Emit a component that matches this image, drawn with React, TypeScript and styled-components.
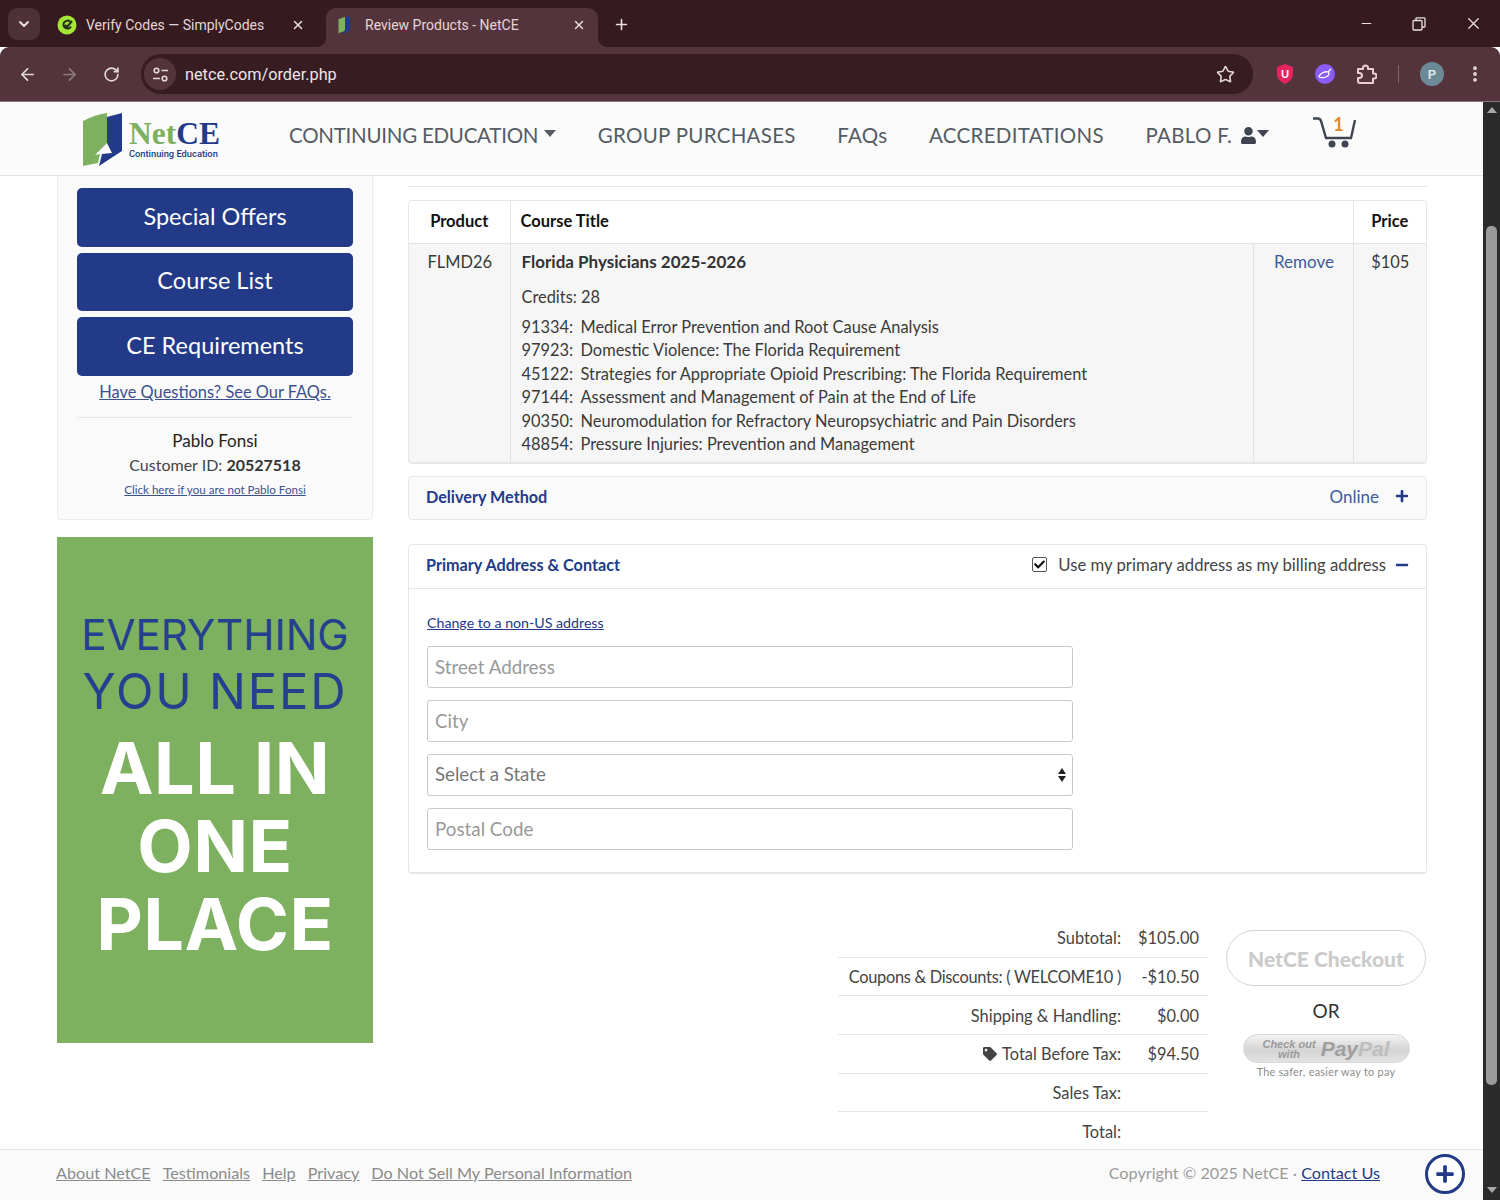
import React from 'react';
import styled, { css, createGlobalStyle } from 'styled-components';
import { ArrowLeft, ArrowRight, ChevronDown, EllipsisVertical, Minus, Plus, RotateCw, Star, X } from 'lucide-react';
import { FaCheck, FaMinus, FaPlus, FaTag, FaUser } from 'react-icons/fa';

const NAVY = '#223a87';
const SANS = '"Lato", "Liberation Sans", sans-serif';

const courses = [
    ['91334:', 'Medical Error Prevention and Root Cause Analysis'],
    ['97923:', 'Domestic Violence: The Florida Requirement'],
    ['45122:', 'Strategies for Appropriate Opioid Prescribing: The Florida Requirement'],
    ['97144:', 'Assessment and Management of Pain at the End of Life'],
    ['90350:', 'Neuromodulation for Refractory Neuropsychiatric and Pain Disorders'],
    ['48854:', 'Pressure Injuries: Prevention and Management'],
];

const totals = [
    { label: 'Subtotal:', value: '$105.00' },
    { label: 'Coupons & Discounts: ( WELCOME10 )', value: '-$10.50', tight: true },
    { label: 'Shipping & Handling:', value: '$0.00' },
    { label: 'Total Before Tax:', value: '$94.50', tag: true },
    { label: 'Sales Tax:', value: '' },
    { label: 'Total:', value: '' },
];

export default function App() {
    return (
        <Screen>
            <GlobalStyle />
            <TabStrip>
                <TabMenu><ChevronDown size={16} strokeWidth={3} /></TabMenu>
                <Tab>
                    <Favicon viewBox="0 0 20 20">
                        <circle cx="10" cy="10" r="9.5" fill="#a3e635" />
                        <path d="M13 6.5a4 4 0 1 0 1 5M8 10l2 2 5-6" fill="none" stroke="#27301a" strokeWidth="2" />
                    </Favicon>
                    <TabTitle>Verify Codes — SimplyCodes</TabTitle>
                    <X size={14} strokeWidth={2.5} />
                </Tab>
                <Tab $active>
                    <Favicon viewBox="0 0 20 24">
                        <path d="M1 5 9 2v17l-8 3z" fill="#7db05f" />
                        <path d="M9 2h6v16l-9 5 3-6z" fill="#223a87" />
                    </Favicon>
                    <TabTitle>Review Products - NetCE</TabTitle>
                    <X size={14} strokeWidth={2.5} />
                </Tab>
                <NewTab><Plus size={17} strokeWidth={2.2} /></NewTab>
                <WindowControls>
                    <Minus size={15} strokeWidth={1.6} />
                    <svg width="14" height="14" viewBox="0 0 14 14" fill="none" stroke="currentColor" strokeWidth="1.3">
                        <rect x="1" y="3.5" width="9" height="9.5" rx="1" />
                        <path d="M4 3.5V1.6q0-.8.8-.8h7.4q.8 0 .8.8v7.6q0 .8-.8.8H10" />
                    </svg>
                    <X size={19} strokeWidth={1.5} />
                </WindowControls>
            </TabStrip>

            <Toolbar>
                <ToolIcon><ArrowLeft size={19} strokeWidth={2.2} /></ToolIcon>
                <ToolIcon $dim><ArrowRight size={19} strokeWidth={2.2} /></ToolIcon>
                <ToolIcon><RotateCw size={17} strokeWidth={2.4} /></ToolIcon>
                <UrlBar>
                    <SiteInfo>
                        <svg width="17" height="17" viewBox="0 0 17 17" fill="none" stroke="currentColor" strokeWidth="1.6">
                            <circle cx="4.5" cy="4.5" r="2.3" />
                            <path d="M9.5 4.5H16M1 12.5h7" />
                            <circle cx="12.5" cy="12.5" r="2.3" />
                        </svg>
                    </SiteInfo>
                    <UrlText>netce.com/order.php</UrlText>
                    <Star size={19} strokeWidth={2} />
                </UrlBar>
                <Extensions>
                    <svg width="18" height="20" viewBox="0 0 18 20">
                        <path d="M9 0l8 3v7c0 5-4 8-8 10-4-2-8-5-8-10V3z" fill="#e5245f" />
                        <text x="9" y="13.5" textAnchor="middle" fontSize="11" fontWeight="700" fill="#fff" fontFamily="Lato">U</text>
                    </svg>
                    <svg width="20" height="20" viewBox="0 0 20 20">
                        <circle cx="10" cy="10" r="10" fill="#8b5cf6" />
                        <path d="M4 12c2-3 6-5 9-4 2 1 1 4-2 5s-7 1-7-1zM13 8l3-3" fill="none" stroke="#fff" strokeWidth="1.3" />
                    </svg>
                    <svg width="21" height="21" viewBox="0 0 21 21" fill="none" stroke="#e8cdd1" strokeWidth="2" strokeLinejoin="round">
                        <path d="M2 5h5V4a2.5 2.5 0 0 1 5 0v1h5v4.5h1a2.5 2.5 0 0 1 0 5h-1V19H4q-2 0-2-2v-3h1.500a2 2 0 0 0 0-5H2z" />
                    </svg>
                    <ToolDivider />
                    <Avatar>P</Avatar>
                    <EllipsisVertical size={20} strokeWidth={2.6} />
                </Extensions>
            </Toolbar>

            <Viewport>
                <Page>
                    <NavBar>
                        <Logo>
                            <svg width="41" height="54" viewBox="0 0 41 54">
                                <path d="M1 9Q12 3 25 1V31L13 43L18 42L16 51L1 54Z" fill="#7db05f" />
                                <path d="M25 5L40 1V39L17 54L20 42L30 41L25 31Z" fill="#223a87" />
                            </svg>
                            <LogoText>
                                <LogoName>Net<span>CE</span></LogoName>
                                <LogoTagline>Continuing Education</LogoTagline>
                            </LogoText>
                        </Logo>
                        <NavLinks>
                            <NavLink $tight>CONTINUING EDUCATION <Caret $color="#555b63" /></NavLink>
                            <NavLink>GROUP PURCHASES</NavLink>
                            <NavLink>FAQs</NavLink>
                            <NavLink>ACCREDITATIONS</NavLink>
                            <NavLink>PABLO F. <UserMenu><FaUser size={17} /><Caret $color="#3f4450" /></UserMenu></NavLink>
                        </NavLinks>
                        <Cart>
                            <svg width="43" height="31" viewBox="0 0 43 31" fill="none" stroke="#3f4450" strokeWidth="2.4">
                                <path d="M0 1.500H5Q7 1.500 8 4L13 21H38L42 3" />
                                <circle cx="19" cy="27" r="3.5" fill="#3f4450" stroke="none" />
                                <circle cx="32" cy="27" r="3.5" fill="#3f4450" stroke="none" />
                            </svg>
                            <CartCount>1</CartCount>
                        </Cart>
                    </NavBar>

                    <Content>
                        <Sidebar>
                            <SideCard>
                                <SideButton>Special Offers</SideButton>
                                <SideButton>Course List</SideButton>
                                <SideButton>CE Requirements</SideButton>
                                <FaqLink>Have Questions? See Our FAQs.</FaqLink>
                                <SideRule />
                                <CustomerName>Pablo Fonsi</CustomerName>
                                <CustomerId>Customer ID: <strong>20527518</strong></CustomerId>
                                <NotYouLink>Click here if you are not Pablo Fonsi</NotYouLink>
                            </SideCard>
                            <Banner>
                                <BannerLead>EVERYTHING</BannerLead>
                                <BannerLead $wide>YOU NEED</BannerLead>
                                <BannerHero>ALL IN<br />ONE<br />PLACE</BannerHero>
                            </Banner>
                        </Sidebar>

                        <Main>
                            <TopRule />
                            <TablePanel>
                                <OrderTable>
                                    <colgroup>
                                        <col width="101" />
                                        <col />
                                        <col width="99" />
                                        <col width="73" />
                                    </colgroup>
                                    <thead>
                                        <tr>
                                            <HeadCell $center>Product</HeadCell>
                                            <HeadCell colSpan={2}>Course Title</HeadCell>
                                            <HeadCell $center>Price</HeadCell>
                                        </tr>
                                    </thead>
                                    <tbody>
                                        <tr>
                                            <BodyCell $center>FLMD26</BodyCell>
                                            <BodyCell>
                                                <CourseName>Florida Physicians 2025-2026</CourseName>
                                                <Credits>Credits: 28</Credits>
                                                <CourseList>
                                                    {courses.map(([code, title]) => (
                                                        <React.Fragment key={code}>
                                                            <span>{code}</span>
                                                            <span>{title}</span>
                                                        </React.Fragment>
                                                    ))}
                                                </CourseList>
                                            </BodyCell>
                                            <BodyCell $center><RemoveLink>Remove</RemoveLink></BodyCell>
                                            <BodyCell $center>$105</BodyCell>
                                        </tr>
                                    </tbody>
                                </OrderTable>
                            </TablePanel>

                            <DeliveryPanel>
                                <PanelHead>
                                    <PanelTitle>Delivery Method</PanelTitle>
                                    <PanelSide>
                                        <DeliveryValue>Online</DeliveryValue>
                                        <FaPlus size={14} color={NAVY} />
                                    </PanelSide>
                                </PanelHead>
                            </DeliveryPanel>

                            <AddressPanel>
                                <PanelHead $divided>
                                    <PanelTitle>Primary Address &amp; Contact</PanelTitle>
                                    <PanelSide>
                                        <FakeCheck><FaCheck size={11} /></FakeCheck>
                                        <BillingLabel>Use my primary address as my billing address</BillingLabel>
                                        <FaMinus size={14} color={NAVY} />
                                    </PanelSide>
                                </PanelHead>
                                <AddressBody>
                                    <ChangeLink>Change to a non-US address</ChangeLink>
                                    <Field placeholder="Street Address" />
                                    <Field placeholder="City" />
                                    <SelectWrap>
                                        <StateSelect defaultValue="">
                                            <option value="">Select a State</option>
                                        </StateSelect>
                                    </SelectWrap>
                                    <Field placeholder="Postal Code" />
                                </AddressBody>
                            </AddressPanel>

                            <Summary>
                                <TotalsList>
                                    {totals.map((row) => (
                                        <TotalRow key={row.label}>
                                            <TotalLabel $tight={row.tight}>
                                                {row.tag && <FaTag size={14} />}
                                                {row.label}
                                            </TotalLabel>
                                            <TotalValue>{row.value}</TotalValue>
                                        </TotalRow>
                                    ))}
                                </TotalsList>
                                <CheckoutColumn>
                                    <CheckoutButton>NetCE Checkout</CheckoutButton>
                                    <OrText>OR</OrText>
                                    <PayPalButton>
                                        <PayPalLead>Check out<br />with</PayPalLead>
                                        <PayPalMark>Pay<span>Pal</span></PayPalMark>
                                    </PayPalButton>
                                    <PayPalNote>The safer, easier way to pay</PayPalNote>
                                </CheckoutColumn>
                            </Summary>
                        </Main>
                    </Content>

                    <Footer>
                        <FooterLinks>
                            <FooterLink>About NetCE</FooterLink>
                            <FooterLink>Testimonials</FooterLink>
                            <FooterLink>Help</FooterLink>
                            <FooterLink>Privacy</FooterLink>
                            <FooterLink>Do Not Sell My Personal Information</FooterLink>
                        </FooterLinks>
                        <Copyright>Copyright © 2025 NetCE · <ContactLink>Contact Us</ContactLink></Copyright>
                        <ExpandButton><FaPlus size={20} /></ExpandButton>
                    </Footer>
                </Page>
                <ScrollTrack>
                    <ScrollArrow $up />
                    <ScrollThumb />
                    <ScrollArrow />
                </ScrollTrack>
            </Viewport>
        </Screen>
    );
}

const GlobalStyle = createGlobalStyle`
    html, body {
        margin: 0;
        padding: 0;
        overflow: hidden;
        background: #fff;
    }
    * {
        box-sizing: border-box;
    }
`;

const Screen = styled.div`
    width: 1500px;
    height: 1200px;
    display: flex;
    flex-direction: column;
    overflow: hidden;
    font-family: ${SANS};
    color: #333;
`;

const TabStrip = styled.div`
    height: 47px;
    flex: none;
    display: flex;
    align-items: flex-end;
    padding-left: 8px;
    background: #351a20;
    color: #eadfe1;
    font-family: "Roboto", "Liberation Sans", sans-serif;
`;

const TabMenu = styled.div`
    width: 32px;
    height: 32px;
    margin-bottom: 7px;
    border-radius: 9px;
    display: flex;
    align-items: center;
    justify-content: center;
    background: #4f3239;
`;

const activeTab = css`
    background: #54343c;
    &::before, &::after {
        content: '';
        position: absolute;
        bottom: 0;
        width: 10px;
        height: 10px;
    }
    &::before {
        left: -10px;
        background: radial-gradient(circle at 0 0, transparent 10px, #54343c 10.5px);
    }
    &::after {
        right: -10px;
        background: radial-gradient(circle at 100% 0, transparent 10px, #54343c 10.5px);
    }
`;

const Tab = styled.div<{ $active?: boolean }>`
    width: 272px;
    height: 39px;
    margin-left: ${(p) => (p.$active ? '9px' : '5px')};
    padding: 0 12px 5px ${(p) => (p.$active ? '10px' : '12px')};
    display: flex;
    align-items: center;
    gap: 9px;
    position: relative;
    border-radius: 10px 10px 0 0;
    ${(p) => p.$active && activeTab}
`;

const Favicon = styled.svg`
    width: 20px;
    height: 20px;
    flex: none;
`;

const TabTitle = styled.span`
    flex: 1;
    font-size: 14px;
    color: #e2d6d8;
    white-space: nowrap;
`;

const NewTab = styled.div`
    margin: 0 0 14px 15px;
    display: flex;
`;

const WindowControls = styled.div`
    margin: 0 17px 14px auto;
    display: flex;
    align-items: center;
    gap: 38px;
`;

const Toolbar = styled.div`
    height: 55px;
    flex: none;
    padding: 0 16px 0 17px;
    display: flex;
    align-items: center;
    background: #54343c;
    border-radius: 9px 9px 0 0;
    border-bottom: 1px solid #8a7378;
    color: #e4d8da;
`;

const ToolIcon = styled.div<{ $dim?: boolean }>`
    width: 20px;
    margin-right: 22px;
    display: flex;
    justify-content: center;
    color: ${(p) => (p.$dim ? '#8f7a7e' : '#e4d8da')};
`;

const UrlBar = styled.div`
    width: 1112px;
    height: 40px;
    margin-left: -2px;
    padding: 0 18px 0 3px;
    display: flex;
    align-items: center;
    border-radius: 20px;
    background: #371c22;
`;

const SiteInfo = styled.div`
    width: 32px;
    height: 32px;
    display: flex;
    align-items: center;
    justify-content: center;
    border-radius: 50%;
    background: #54343c;
`;

const UrlText = styled.span`
    flex: 1;
    margin-left: 9px;
    font: 16.3px "Roboto", "Liberation Sans", sans-serif;
    color: #eee5e6;
`;

const Extensions = styled.div`
    flex: 1;
    padding: 0 0 0 23px;
    margin-right: -1px;
    display: flex;
    align-items: center;
    justify-content: space-between;
`;

const ToolDivider = styled.div`
    width: 1px;
    height: 18px;
    background: #7d666b;
`;

const Avatar = styled.div`
    width: 24px;
    height: 24px;
    border-radius: 50%;
    display: flex;
    align-items: center;
    justify-content: center;
    background: #6b8a96;
    color: #e8eef0;
    font: 500 13px "Roboto", sans-serif;
`;

const Viewport = styled.div`
    flex: 1;
    min-height: 0;
    display: flex;
`;

const Page = styled.div`
    flex: 1;
    min-width: 0;
    display: flex;
    flex-direction: column;
`;

const NavBar = styled.header`
    height: 74px;
    flex: none;
    padding-left: 82px;
    display: flex;
    align-items: center;
    background: #fbfbfc;
    border-bottom: 1px solid #e3e3e3;
`;

const Logo = styled.div`
    width: 207px;
    flex: none;
    display: flex;
    gap: 6px;
`;

const LogoText = styled.div`
    padding-top: 7px;
    display: flex;
    flex-direction: column;
`;

const LogoName = styled.div`
    font: 700 31.5px/30px "Liberation Serif", serif;
    color: #7db05f;
    & span {
        color: ${NAVY};
    }
`;

const LogoTagline = styled.div`
    font: 500 9.3px/10px "Roboto", sans-serif;
    color: ${NAVY};
    white-space: nowrap;
`;

const NavLinks = styled.nav`
    display: flex;
    gap: 41.5px;
    margin-bottom: 7px;
`;

const NavLink = styled.a<{ $tight?: boolean }>`
    display: flex;
    align-items: center;
    gap: 6px;
    font-size: 20.5px;
    letter-spacing: ${(p) => (p.$tight ? '-0.25px' : '0.3px')};
    color: #555b63;
    white-space: nowrap;
`;

const Caret = styled.span<{ $color: string }>`
    width: 0;
    height: 0;
    border-left: 6px solid transparent;
    border-right: 6px solid transparent;
    border-top: 7px solid ${(p) => p.$color};
    margin-bottom: 3px;
`;

const UserMenu = styled.span`
    display: inline-flex;
    align-items: center;
    color: #3f4450;
    margin-left: 2px;
`;

const Cart = styled.div`
    margin: 0 0 12px 44px;
    position: relative;
    display: flex;
`;

const CartCount = styled.span`
    position: absolute;
    left: 20px;
    top: -3px;
    font-size: 18px;
    line-height: 20px;
    font-weight: 700;
    color: #e08a2c;
`;

const Content = styled.main`
    flex: 1;
    min-height: 0;
    padding-left: 57px;
    display: flex;
    gap: 35px;
    background: #fff;
`;

const Sidebar = styled.aside`
    width: 316px;
    flex: none;
    display: flex;
    flex-direction: column;
    gap: 17px;
`;

const SideCard = styled.section`
    padding: 12px 19px 0;
    height: 344px;
    flex: none;
    display: flex;
    flex-direction: column;
    align-items: center;
    background: #fafafa;
    border: 1px solid #ececec;
    border-top: none;
    border-radius: 0 0 4px 4px;
`;

const SideButton = styled.button`
    width: 100%;
    height: 58.5px;
    margin-bottom: 6px;
    padding-bottom: 4px;
    flex: none;
    border: none;
    border-radius: 5px;
    background: ${NAVY};
    color: #fff;
    font: 23.5px ${SANS};
`;

const FaqLink = styled.a`
    margin-top: -1.5px;
    font-size: 16.4px;
    line-height: 24px;
    color: #3a5090;
    text-decoration: underline;
`;

const SideRule = styled.div`
    width: 100%;
    height: 1px;
    margin: 13px 0 11px;
    background: #e6e6e6;
`;

const CustomerName = styled.div`
    font-size: 17px;
    line-height: 23px;
    color: #222;
`;

const CustomerId = styled.div`
    font-size: 16px;
    line-height: 25px;
    color: #444;
    & strong {
        font-weight: 700;
        color: #333;
    }
`;

const NotYouLink = styled.a`
    margin-top: 5px;
    font-size: 11.6px;
    line-height: 16px;
    color: #3a5090;
    text-decoration: underline;
`;

const Banner = styled.section`
    height: 506px;
    flex: none;
    padding-top: 69px;
    text-align: center;
    font-family: "Inter", ${SANS};
    background: #7db05f;
`;

const BannerLead = styled.div<{ $wide?: boolean }>`
    font-size: ${(p) => (p.$wide ? '49px' : '42px')};
    letter-spacing: ${(p) => (p.$wide ? '1.8px' : '0')};
    line-height: 57px;
    color: #24408e;
    white-space: nowrap;
`;

const BannerHero = styled.div`
    margin-top: 9px;
    font-size: 72px;
    font-weight: 700;
    letter-spacing: 0.5px;
    line-height: 78px;
    color: #fff;
`;

const Main = styled.div`
    width: 1019px;
    flex: none;
    display: flex;
    flex-direction: column;
`;

const TopRule = styled.div`
    height: 1px;
    flex: none;
    margin-top: 10px;
    background: #e6e6e6;
`;

const Panel = styled.section`
    flex: none;
    border: 1px solid #e6e6e6;
    border-radius: 4px;
    background: #fafafa;
    overflow: hidden;
`;

const TablePanel = styled(Panel)`
    height: 264px;
    margin-top: 13px;
    border-bottom-width: 2px;
    background: #f6f6f6;
`;

const OrderTable = styled.table`
    width: 100%;
    height: 100%;
    table-layout: fixed;
    border-collapse: collapse;
`;

const HeadCell = styled.th<{ $center?: boolean }>`
    height: 42px;
    padding: 0 10px 1px;
    text-align: ${(p) => (p.$center ? 'center' : 'left')};
    font-size: 16.5px;
    font-weight: 700;
    color: #111;
    background: #fff;
    border-bottom: 1px solid #e3e3e3;
    border-left: 1px solid #e3e3e3;
    &:first-child {
        border-left: none;
    }
`;

const BodyCell = styled.td<{ $center?: boolean }>`
    padding: 7px 10px 0 11px;
    vertical-align: top;
    text-align: ${(p) => (p.$center ? 'center' : 'left')};
    font-size: 16.4px;
    line-height: 22px;
    color: #3a3a3a;
    border-left: 1px solid #e3e3e3;
    &:first-child {
        border-left: none;
    }
`;

const CourseName = styled.div`
    font-size: 17px;
    font-weight: 700;
    color: #333;
`;

const Credits = styled.div`
    margin-top: 13px;
`;

const CourseList = styled.div`
    margin-top: 7px;
    display: grid;
    grid-template-columns: 59px 1fr;
    line-height: 23.5px;
`;

const RemoveLink = styled.a`
    font-size: 17px;
    color: #3f5a9c;
`;

const DeliveryPanel = styled(Panel)`
    margin-top: 12px;
`;

const PanelHead = styled.div<{ $divided?: boolean }>`
    height: ${(p) => (p.$divided ? '44px' : '42px')};
    padding: 0 17px 4px;
    display: flex;
    align-items: center;
    justify-content: space-between;
    border-bottom: ${(p) => (p.$divided ? '1px solid #e8e8e8' : 'none')};
`;

const PanelTitle = styled.div`
    font-size: 16.2px;
    font-weight: 700;
    color: ${NAVY};
`;

const PanelSide = styled.div`
    display: flex;
    align-items: center;
`;

const DeliveryValue = styled.span`
    margin-right: 16px;
    font-size: 17px;
    color: #3f5a9c;
`;

const BillingLabel = styled.span`
    margin: 0 9px 0 11px;
    font-size: 16.7px;
    color: #444;
`;

const FakeCheck = styled.span`
    width: 15px;
    height: 15px;
    display: flex;
    align-items: center;
    justify-content: center;
    background: #fff;
    border: 1px solid #555;
    border-radius: 2px;
    color: #111;
`;

const AddressPanel = styled(Panel)`
    margin-top: 24px;
    height: 330px;
    background: #fff;
    border-bottom-width: 2px;
`;

const AddressBody = styled.div`
    padding: 25px 18px 0;
    display: flex;
    flex-direction: column;
    align-items: flex-start;
    gap: 12px;
`;

const ChangeLink = styled.a`
    margin-bottom: 2px;
    font-size: 14.2px;
    line-height: 18px;
    color: ${NAVY};
    text-decoration: underline;
`;

const Field = styled.input`
    width: 646px;
    height: 42px;
    padding: 0 7px 2px;
    border: 1px solid #c9c9c9;
    border-radius: 3px;
    background: #fff;
    font: 18.8px ${SANS};
    &::placeholder {
        color: #999;
        opacity: 1;
    }
`;

const SelectWrap = styled.div`
    position: relative;
    &::before, &::after {
        content: '';
        position: absolute;
        right: 7px;
        border-left: 4px solid transparent;
        border-right: 4px solid transparent;
    }
    &::before {
        top: 14px;
        border-bottom: 6px solid #222;
    }
    &::after {
        top: 22px;
        border-top: 6px solid #222;
    }
`;

const StateSelect = styled.select`
    display: block;
    width: 646px;
    height: 42px;
    padding: 0 7px 2px;
    appearance: none;
    border: 1px solid #c9c9c9;
    border-radius: 3px;
    background: #fff;
    font: 18.7px ${SANS};
    color: #777;
`;

const Summary = styled.div`
    flex: none;
    margin-top: 45px;
    display: flex;
    align-items: flex-start;
    justify-content: flex-end;
`;

const TotalsList = styled.div`
    width: 370px;
`;

const TotalRow = styled.div`
    height: 38.7px;
    display: flex;
    align-items: center;
    border-bottom: 1px solid #e6e6e6;
    font-size: 16.4px;
    color: #444;
    &:last-child {
        border-bottom: none;
    }
`;

const TotalLabel = styled.span<{ $tight?: boolean }>`
    flex: 1;
    display: flex;
    align-items: center;
    justify-content: flex-end;
    gap: 5px;
    letter-spacing: ${(p) => (p.$tight ? '-0.3px' : '0')};
    white-space: nowrap;
`;

const TotalValue = styled.span`
    width: 87px;
    padding-right: 9px;
    text-align: right;
`;

const CheckoutColumn = styled.div`
    width: 200px;
    margin: 11px 1px 0 18px;
    display: flex;
    flex-direction: column;
    align-items: center;
`;

const CheckoutButton = styled.div`
    width: 100%;
    height: 56px;
    display: flex;
    align-items: center;
    justify-content: center;
    border: 1px solid #d4d4d4;
    border-radius: 28px;
    font-size: 21px;
    font-weight: 900;
    color: #cbcbcb;
`;

const OrText = styled.div`
    margin-top: 13px;
    font-size: 19px;
    line-height: 24px;
    color: #333;
`;

const PayPalButton = styled.div`
    width: 167px;
    height: 29px;
    margin-top: 11px;
    display: flex;
    align-items: center;
    justify-content: center;
    gap: 5px;
    border-radius: 15px;
    border: 1px solid #d8d8d8;
    background: linear-gradient(#f4f4f4, #d4d4d4 55%, #e2e2e2);
`;

const PayPalLead = styled.span`
    font: italic 700 11px/10px "Liberation Sans", sans-serif;
    text-align: center;
    color: #9a9a9a;
`;

const PayPalMark = styled.span`
    font: italic 700 21px/1 "Liberation Sans", sans-serif;
    color: #9f9f9f;
    & span {
        color: #bdbdbd;
    }
`;

const PayPalNote = styled.div`
    margin-top: 2px;
    font-size: 10.8px;
    line-height: 14px;
    letter-spacing: 0.3px;
    color: #8b8b8b;
`;

const Footer = styled.footer`
    height: 51px;
    flex: none;
    position: relative;
    padding: 0 18px 0 56px;
    display: flex;
    align-items: center;
    background: #fafafa;
    border-top: 1px solid #e6e6e6;
    font-size: 16.2px;
`;

const FooterLinks = styled.div`
    flex: 1;
    display: flex;
    gap: 12px;
    margin-bottom: 5px;
`;

const FooterLink = styled.a`
    color: #8a8a8a;
    text-decoration: underline;
`;

const Copyright = styled.div`
    margin-bottom: 5px;
    color: #9a9a9a;
`;

const ContactLink = styled.a`
    color: ${NAVY};
    text-decoration: underline;
`;

const ExpandButton = styled.div`
    width: 40px;
    height: 40px;
    margin: 0 0 3px 45px;
    display: flex;
    align-items: center;
    justify-content: center;
    border: 3px solid ${NAVY};
    border-radius: 50%;
    background: #fff;
    color: ${NAVY};
`;

const ScrollTrack = styled.div`
    width: 17px;
    flex: none;
    display: flex;
    flex-direction: column;
    align-items: center;
    background: #2b2b2b;
`;

const ScrollArrow = styled.div<{ $up?: boolean }>`
    width: 0;
    height: 0;
    margin: ${(p) => (p.$up ? '5px 0 0' : 'auto 0 7px')};
    border-left: 5px solid transparent;
    border-right: 5px solid transparent;
    border-bottom: ${(p) => (p.$up ? '6px solid #a8a8a8' : 'none')};
    border-top: ${(p) => (p.$up ? 'none' : '6px solid #a8a8a8')};
`;

const ScrollThumb = styled.div`
    width: 11px;
    height: 859px;
    margin-top: 113px;
    border-radius: 5px;
    background: #9b9b9b;
`;
